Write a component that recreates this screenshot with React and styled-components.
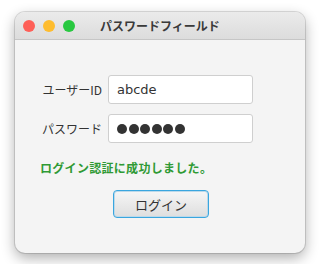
import React from "react";
import styled, { createGlobalStyle } from "styled-components";

const GlobalStyle = createGlobalStyle`
  html, body {
    margin: 0;
    padding: 0;
    background: #ffffff;
  }
  body {
    font-family: "Noto Sans CJK JP", "Noto Sans", sans-serif;
  }
`;

const Page = styled.div`
  width: 320px;
  height: 264px;
  padding: 12px 0 0 15px;
  box-sizing: border-box;
`;

const Window = styled.div`
  width: 290px;
  height: 241px;
  background: #f4f4f4;
  border-radius: 10px;
  overflow: hidden;
  box-shadow: 0 0 0 1px rgba(0, 0, 0, 0.12), 0 5px 14px rgba(0, 0, 0, 0.32);
  display: flex;
  flex-direction: column;
`;

const TitleBar = styled.div`
  height: 27px;
  flex-shrink: 0;
  position: relative;
  display: flex;
  align-items: center;
  justify-content: center;
  background: linear-gradient(#ebebeb, #dcdcdc);
  border-bottom: 1px solid #c6c6c6;
`;

const Lights = styled.div`
  position: absolute;
  left: 8px;
  top: 8px;
  display: flex;
  gap: 8px;
`;

const Light = styled.span`
  width: 12px;
  height: 12px;
  border-radius: 50%;
  background: ${(p) => p.color};
`;

const Title = styled.div`
  font-size: 12px;
  font-weight: 700;
  color: #3a3a3a;
`;

const Content = styled.div`
  padding: 35px 0 0 25px;
  display: flex;
  flex-direction: column;
`;

const Form = styled.div`
  display: grid;
  grid-template-columns: 62px 145px;
  column-gap: 6px;
  row-gap: 10px;
  align-items: center;
`;

const Label = styled.div`
  font-size: 12px;
  color: #333;
  text-align: right;
  white-space: nowrap;
`;

const Field = styled.div`
  height: 29px;
  box-sizing: border-box;
  background: #fff;
  border: 1px solid #cfcfcf;
  border-radius: 3px;
  padding: 0 8px;
  display: flex;
  align-items: center;
  font-family: "DejaVu Sans", "Liberation Sans", sans-serif;
  font-size: 13px;
  color: #333;
`;

const Dots = styled.div`
  display: flex;
  gap: 1.6px;
`;

const Dot = styled.span`
  width: 10px;
  height: 10px;
  border-radius: 50%;
  background: #333;
`;

const Message = styled.div`
  margin-top: 17px;
  font-size: 12px;
  font-weight: 700;
  letter-spacing: 0.3px;
  line-height: 16px;
  color: #2f9a35;
`;

const ButtonRow = styled.div`
  margin-top: 14px;
  display: flex;
  padding-left: 73px;
`;

const Button = styled.button`
  width: 96px;
  height: 28px;
  border: 1px solid #3aa6df;
  border-radius: 4px;
  box-shadow: inset 0 0 0 1px #bcd9ea;
  background: linear-gradient(#f6f6f6, #dedede);
  font-family: "Noto Sans CJK JP", sans-serif;
  font-size: 13px;
  color: #333;
  padding: 0;
`;

export default function App() {
  return (
    <Page>
      <GlobalStyle />
      <Window>
        <TitleBar>
          <Lights>
            <Light color="#fe5f57" />
            <Light color="#febc2e" />
            <Light color="#28c840" />
          </Lights>
          <Title>パスワードフィールド</Title>
        </TitleBar>
        <Content>
          <Form>
            <Label>ユーザーID</Label>
            <Field>abcde</Field>
            <Label>パスワード</Label>
            <Field>
              <Dots>
                {Array.from({ length: 6 }).map((_, i) => (
                  <Dot key={i} />
                ))}
              </Dots>
            </Field>
          </Form>
          <Message>ログイン認証に成功しました。</Message>
          <ButtonRow>
            <Button>ログイン</Button>
          </ButtonRow>
        </Content>
      </Window>
    </Page>
  );
}
